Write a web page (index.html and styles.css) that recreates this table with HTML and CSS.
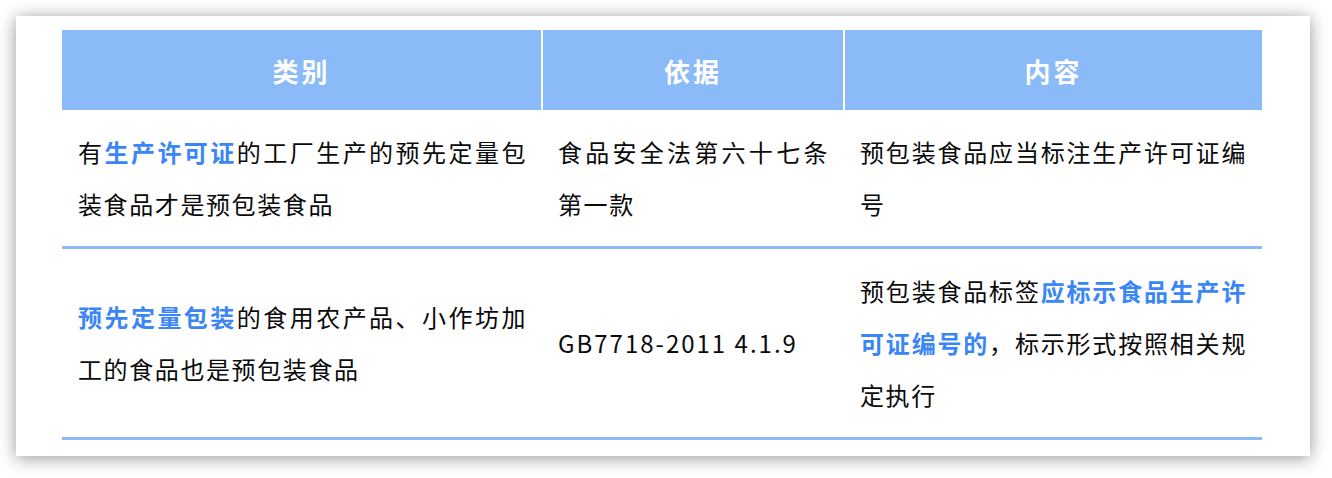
FILE: index.html
```html
<!DOCTYPE html>
<html lang="zh-CN">
<head>
<meta charset="utf-8">
<title>预包装食品</title>
<link rel="stylesheet" href="styles.css">
</head>
<body>
<div class="page">
  <div class="card">
    <table class="info">
      <colgroup>
        <col class="c1"><col class="c2"><col class="c3">
      </colgroup>
      <thead>
        <tr><th>类别</th><th>依据</th><th>内容</th></tr>
      </thead>
      <tbody>
        <tr>
          <td>有<span class="hl">生产许可证</span>的工厂生产的预先定量包装食品才是预包装食品</td>
          <td>食品安全法第六十七条第一款</td>
          <td>预包装食品应当标注生产许可证编号</td>
        </tr>
        <tr>
          <td><span class="hl">预先定量包装</span>的食用农产品、小作坊加工的食品也是预包装食品</td>
          <td><span class="latin">GB7718-2011 4.1.9</span></td>
          <td>预包装食品标签<span class="hl">应标示食品生产许可证编号的</span>，标示形式按照相关规定执行</td>
        </tr>
      </tbody>
    </table>
  </div>
</div>
</body>
</html>
```

FILE: styles.css
```css
html, body {
  margin: 0;
  padding: 0;
  background: #ffffff;
}
.page {
  padding: 16px 22px 22px 16px;
}
.card {
  width: 1294px;
  height: 440px;
  box-sizing: border-box;
  background: #ffffff;
  box-shadow: 0 2px 16px rgba(0, 0, 0, 0.42);
  padding: 14px 48px 0 46px;
}
.info {
  width: 1200px;
  border-collapse: collapse;
  table-layout: fixed;
  font-family: "Noto Sans CJK SC", "Noto Sans", sans-serif;
  color: #0a0a0a;
}
.c1 { width: 480px; }
.c2 { width: 302px; }
.c3 { width: 418px; }
.info th {
  height: 80px;
  padding: 0;
  background: #8bbaf8;
  color: #ffffff;
  font-size: 26px;
  font-weight: 700;
  letter-spacing: 3px;
  text-align: center;
  vertical-align: middle;
}
.info th + th {
  border-left: 2px solid #ffffff;
}
.info td {
  padding: 16px 15px 16px 16px;
  font-size: 24px;
  line-height: 52px;
  letter-spacing: 1.6px;
  text-align: justify;
  vertical-align: middle;
  border-bottom: 3px solid #8bbaf8;
}
.hl {
  color: #3b86f6;
  font-weight: 700;
}
.latin {
  letter-spacing: 2px;
}
```
